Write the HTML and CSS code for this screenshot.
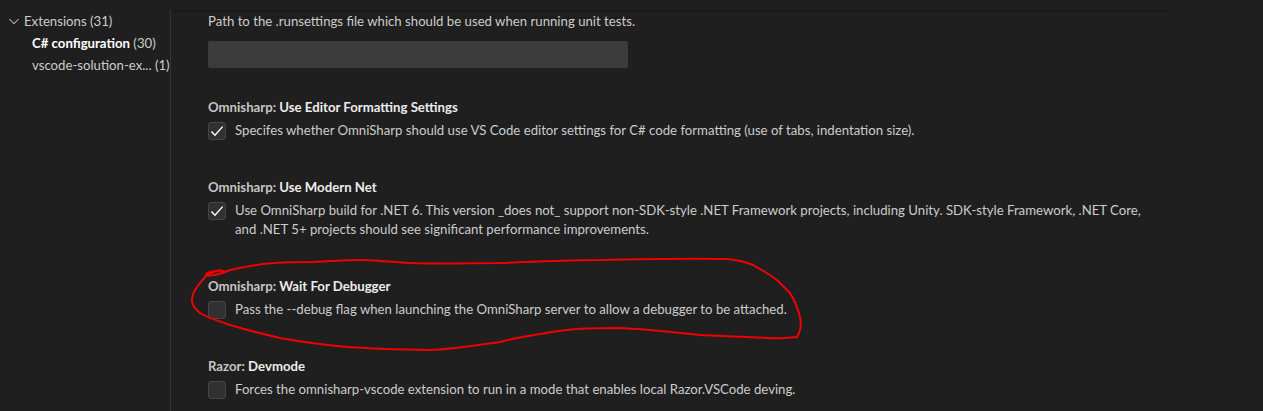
FILE: index.html
```html
<!DOCTYPE html>
<html lang="en">
<head>
<meta charset="utf-8">
<title>Settings</title>
<link rel="stylesheet" href="styles.css">
</head>
<body>
<div class="page">
  <nav class="sidebar">
    <div class="tree-row tree-parent">
      <svg class="chevron" viewBox="0 0 16 16" width="16" height="16"><path fill="#c5c5c5" d="M7.976 10.072l4.357-4.357.62.618L8.284 11h-.618L3 6.333l.619-.618 4.357 4.357z"/></svg>
      <span class="tree-label">Extensions <span class="count">(31)</span></span>
    </div>
    <div class="tree-row tree-child">
      <span class="tree-label"><b class="active">C# configuration</b> <span class="count">(30)</span></span>
    </div>
    <div class="tree-row tree-child">
      <span class="tree-label">vscode-solution-ex... <span class="count">(1)</span></span>
    </div>
  </nav>
  <main class="content">
    <section class="setting setting-first">
      <div class="desc">Path to the .runsettings file which should be used when running unit tests.</div>
      <div class="text-input"></div>
    </section>
    <section class="setting">
      <div class="title"><span class="cat">Omnisharp: </span><span class="name">Use Editor Formatting Settings</span></div>
      <div class="row">
        <span class="checkbox checked"><svg viewBox="0 0 16 16" width="16" height="16"><path fill="none" stroke="#ffffff" stroke-width="1.4" d="M2.4 8.4l3.6 3.8 7.6-8.6"/></svg></span>
        <div class="desc">Specifes whether OmniSharp should use VS Code editor settings for C# code formatting (use of tabs, indentation size).</div>
      </div>
    </section>
    <section class="setting">
      <div class="title"><span class="cat">Omnisharp: </span><span class="name">Use Modern Net</span></div>
      <div class="row">
        <span class="checkbox checked"><svg viewBox="0 0 16 16" width="16" height="16"><path fill="none" stroke="#ffffff" stroke-width="1.4" d="M2.4 8.4l3.6 3.8 7.6-8.6"/></svg></span>
        <div class="desc">Use OmniSharp build for .NET 6. This version _does not_ support non-SDK-style .NET Framework projects, including Unity. SDK-style Framework, .NET Core, and .NET 5+ projects should see significant performance improvements.</div>
      </div>
    </section>
    <section class="setting">
      <div class="title"><span class="cat">Omnisharp: </span><span class="name">Wait For Debugger</span></div>
      <div class="row">
        <span class="checkbox"></span>
        <div class="desc">Pass the --debug flag when launching the OmniSharp server to allow a debugger to be attached.</div>
      </div>
    </section>
    <section class="setting">
      <div class="title"><span class="cat">Razor: </span><span class="name">Devmode</span></div>
      <div class="row">
        <span class="checkbox"></span>
        <div class="desc">Forces the omnisharp-vscode extension to run in a mode that enables local Razor.VSCode deving.</div>
      </div>
    </section>
  </main>
</div>
<svg class="annotation" viewBox="0 0 1263 411" width="1263" height="411">
  <path fill="none" stroke="#f20000" stroke-width="2" stroke-linejoin="round" stroke-linecap="round"
    d="M224 271 C216 270 208 272 206 274 C205 277 216 276 230 270 C245 267 255 265 263 264 C280 262 297 262 313 262 C330 261 346 260 363 260 C380 260 396 263 410 263 C440 264 470 263 500 263 C533 262 566 260 600 260 C642 259 685 258 727 259 C737 260 746 262 753 265 C762 270 770 275 777 280 C782 285 786 289 790 293 C795 301 798 309 800 317 C801 322 801 326 800 330 C799 333 798 335 797 337 C787 338 777 339 767 338 C745 337 722 336 700 335 C672 332 645 329 617 328 C600 328 583 328 567 330 C550 332 533 335 517 338 C511 339 505 341 500 342 C477 345 453 349 430 350 C402 350 375 349 347 347 C325 345 302 342 280 338 C263 334 246 330 230 325 C219 321 208 318 200 313 C195 309 192 305 192 300 C192 295 194 291 197 287 C200 283 203 279 207 275 C211 273 215 271 220 270"/>
</svg>
</body>
</html>
```
FILE: styles.css
```css
html, body {
  margin: 0;
  padding: 0;
  background: #1f1f1f;
}
body {
  width: 1263px;
  height: 411px;
  overflow: hidden;
  position: relative;
  font-family: Lato, "Noto Sans", sans-serif;
  font-size: 13.2px;
  color: #cccccc;
}
.page {
  display: flex;
  padding-top: 10px;
}
.sidebar {
  flex: none;
  width: 171px;
  height: 401px;
  box-sizing: border-box;
  border-right: 1px solid #333333;
}
.tree-row {
  height: 22px;
  display: flex;
  align-items: center;
  white-space: nowrap;
}
.tree-parent {
  padding-left: 6px;
}
.chevron {
  flex: none;
  margin-right: 2px;
}
.tree-child {
  padding-left: 32px;
}
.tree-label {
  color: #cccccc;
}
.active {
  color: #ffffff;
  font-weight: 700;
}
.content {
  flex: none;
  width: 999px;
  height: 401px;
  overflow: hidden;
  box-sizing: border-box;
  border-top: 2px solid #191919;
  padding-left: 37px;
}
.setting {
  padding-bottom: 38px;
}
.setting-first {
  padding-bottom: 30px;
}
.desc {
  line-height: 19px;
  max-width: 920px;
}
.text-input {
  margin-top: 10px;
  width: 420px;
  height: 27px;
  background: #3c3c3c;
  border-radius: 2px;
}
.title {
  line-height: 18px;
  font-weight: 700;
  margin-bottom: 5px;
}
.cat {
  color: #c5c5c5;
}
.name {
  color: #ececec;
}
.row {
  display: flex;
  align-items: flex-start;
}
.checkbox {
  flex: none;
  width: 18px;
  height: 18px;
  box-sizing: border-box;
  margin-top: 1px;
  margin-right: 9px;
  background: #313131;
  border: 1px solid #454545;
  border-radius: 3px;
  display: flex;
  align-items: center;
  justify-content: center;
}
.annotation {
  position: absolute;
  left: 0;
  top: 0;
  pointer-events: none;
}
```
